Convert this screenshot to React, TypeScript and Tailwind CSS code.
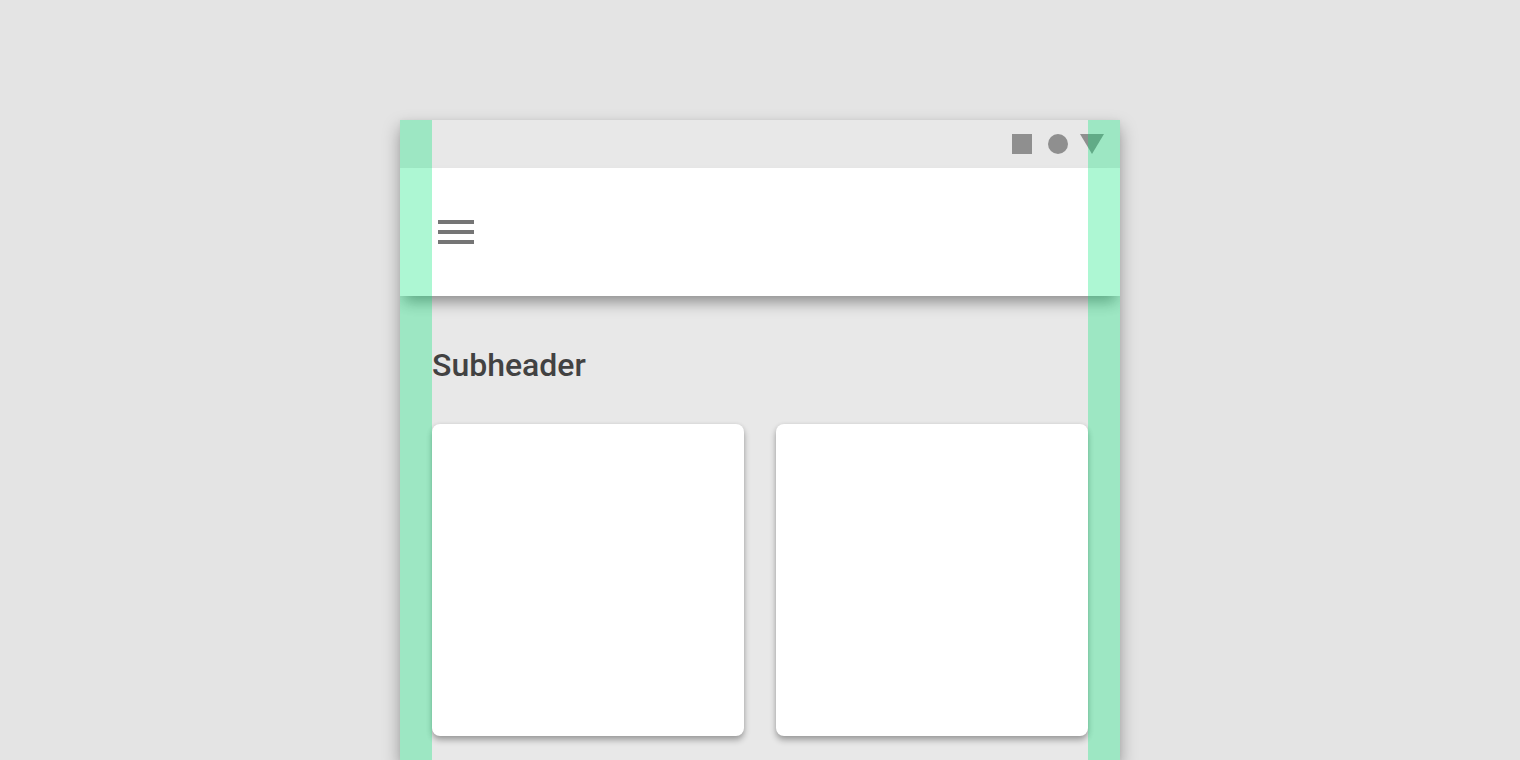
import { clsx } from "clsx";

const CARDS = ["first", "second"];

function StatusBar() {
  return (
    <div className="flex h-12 items-center justify-end bg-[#e8e8e8] px-4">
      <svg viewBox="0 0 92 20" className="h-5 w-[92px] fill-[#8f8f8f]" aria-hidden="true">
        <rect width="20" height="20" />
        <circle cx="46" cy="10" r="10" />
        <path d="M68 0h24L80 20z" />
      </svg>
    </div>
  );
}

function AppBar() {
  return (
    <header className="relative flex h-32 items-center bg-white px-8 shadow-[0_10px_14px_-4px_rgba(0,0,0,0.4)]">
      <button type="button" aria-label="Open menu" className="h-12 w-12">
        <svg viewBox="0 0 24 24" className="h-12 w-12 fill-[#757575]" aria-hidden="true">
          <path d="M3 18h18v-2H3v2zm0-5h18v-2H3v2zm0-7v2h18V6H3z" />
        </svg>
      </button>
    </header>
  );
}

function Card() {
  return (
    <article className="aspect-square rounded-lg bg-white shadow-[0_4px_6px_rgba(0,0,0,0.32),0_0_4px_rgba(0,0,0,0.06)]" />
  );
}

// Tinted strip over the screen margin
function Keyline({ side }: { side: "left" | "right" }) {
  return (
    <div
      className={clsx(
        "pointer-events-none absolute inset-y-0 w-8 bg-[#00e676]/32",
        side === "left" ? "left-0" : "right-0"
      )}
    />
  );
}

export default function App() {
  return (
    <div className="flex h-screen flex-col overflow-hidden bg-[#e4e4e4] pt-[120px] font-['Roboto',sans-serif]">
      <div className="mx-auto flex w-full max-w-[720px] grow flex-col shadow-[0_8px_16px_rgba(0,0,0,0.34),0_0_4px_rgba(0,0,0,0.04)]">
        <div className="relative grow overflow-hidden bg-[#e8e8e8]">
          <StatusBar />
          <AppBar />
          <main className="px-8 pb-6">
            <h2 className="flex h-32 items-center pt-2.5 text-[32px] leading-10 font-medium text-[#424242]">
              Subheader
            </h2>
            <div className="grid grid-cols-2 gap-8">
              {CARDS.map((card) => (
                <Card key={card} />
              ))}
            </div>
          </main>
          <Keyline side="left" />
          <Keyline side="right" />
        </div>
      </div>
    </div>
  );
}
